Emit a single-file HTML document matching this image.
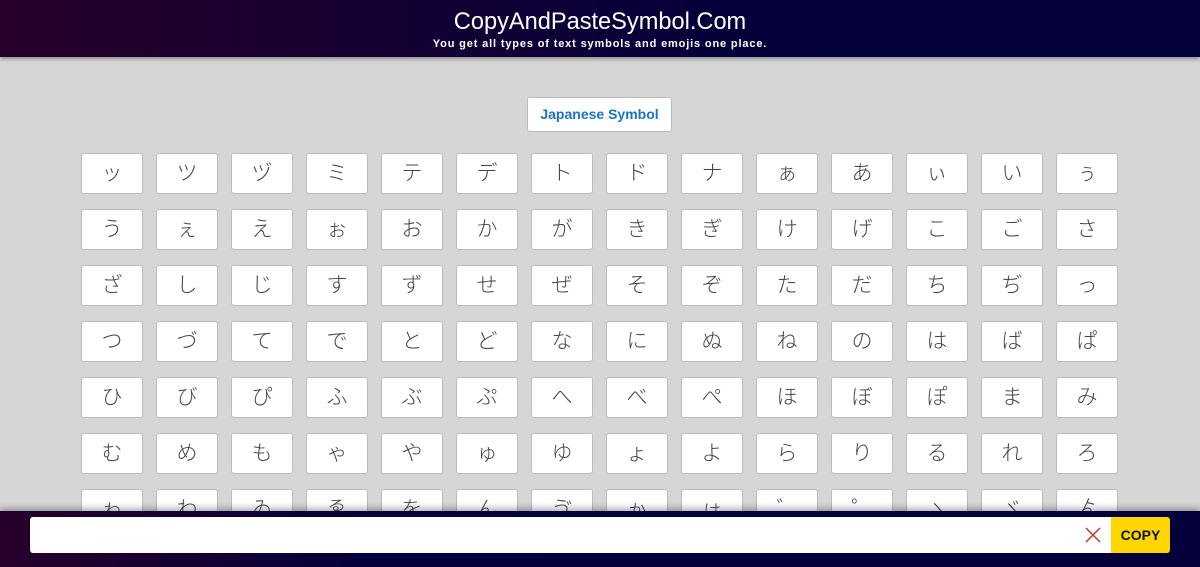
<!DOCTYPE html>
<html><head><meta charset="utf-8"><style>
*{box-sizing:border-box;margin:0;padding:0}
html,body{width:1200px;height:567px;overflow:hidden;background:#d6d6d6;font-family:"Liberation Sans","Noto Sans CJK JP",sans-serif}
.hd{position:absolute;left:0;top:0;width:1200px;height:57px;background:linear-gradient(90deg,#26002a,#05003a 60%,#03003a);box-shadow:0 2px 4px rgba(0,0,0,.35);text-align:center;color:#fff}
.hd h1{font-weight:normal;font-size:23.6px;padding-top:9px;line-height:26px}
.hd p{font-size:11px;font-weight:bold;margin-top:3px;letter-spacing:.85px}
.btn{position:absolute;left:527px;top:97px;width:145px;height:35px;background:#fff;border:1px solid #bbb;border-radius:3px;color:#1a73c8;font-weight:bold;font-size:14px;text-align:center;line-height:33px}
.g{position:absolute;left:81px;top:153px;width:1050px}
.c{position:absolute;width:62px;height:41px;background:#fff;border:1px solid #bbb;border-radius:3px;text-align:center;line-height:39px;font-size:21px;color:#444;font-weight:300}
.bb{position:absolute;left:0;top:511px;width:1200px;height:56px;background:linear-gradient(90deg,#26002a,#05003a 30%,#03003a);box-shadow:0 -3px 6px rgba(0,0,40,.3)}
.in{position:absolute;left:30px;top:6px;width:1082px;height:36px;background:#fff;border-radius:3px 0 0 3px}
.x{position:absolute;right:11px;top:10px}
.cp{position:absolute;left:1111px;top:6px;width:59px;height:36px;background:#ffd600;border-radius:0 3px 3px 0;font-weight:bold;font-size:14px;text-align:center;line-height:36px;color:#111}
</style></head><body>
<div class="hd"><h1>CopyAndPasteSymbol.Com</h1><p>You get all types of text symbols and emojis one place.</p></div>
<div class="btn">Japanese Symbol</div>
<div class="g" id="g"></div>
<div class="bb"><div class="in"><svg class="x" width="16" height="16" viewBox="0 0 16 16"><path d="M1 1L15 15M15 1L1 15" stroke="#c0392b" stroke-width="1.5"/></svg></div><div class="cp">COPY</div></div>
<script>
var s="ッツヅミテデトドナぁあぃいぅうぇえぉおかがきぎけげこごさざしじすずせぜそぞただちぢっつづてでとどなにぬねのはばぱひびぴふぶぷへべぺほぼぽまみむめもゃやゅゆょよらりるれろゎわゐゑをんゔゕゖ゛゜ゝゞゟ";
var a=Array.from(s),h="";
a.forEach(function(ch,i){var r=Math.floor(i/14),c=i%14;h+='<div class="c" style="left:'+(c*75)+'px;top:'+(r*56)+'px">'+ch+'</div>';});
document.getElementById('g').innerHTML=h;
</script>
</body></html>
